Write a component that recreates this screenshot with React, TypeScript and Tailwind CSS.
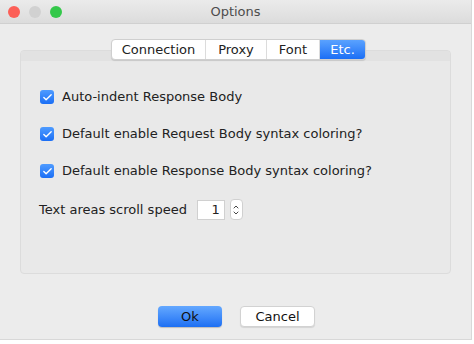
import { Check, ChevronUp, ChevronDown } from 'lucide-react';

const tabs = [
  { label: 'Connection', w: 'w-[94px]' },
  { label: 'Proxy', w: 'w-[61px]' },
  { label: 'Font', w: 'w-[53px]' },
  { label: 'Etc.', w: 'w-[45px]' },
];

const options = [
  'Auto-indent Response Body',
  'Default enable Request Body syntax coloring?',
  'Default enable Response Body syntax coloring?',
];

function CheckBox() {
  return (
    <span className="flex h-[14px] w-[14px] items-center justify-center rounded-[3px] bg-gradient-to-b from-[#4e9bff] to-[#1a6ef5]">
      <Check className="h-[11px] w-[11px] text-white" strokeWidth={3} />
    </span>
  );
}

export default function App() {
  return (
    <div
      className="flex h-[344px] w-[474px] flex-col bg-white"
      style={{ fontFamily: '"DejaVu Sans", "Open Sans", sans-serif' }}
    >
      <div className="flex h-[340px] w-[472px] flex-col border-r border-b border-[#d8d8d8] bg-[#ececec]">
        {/* Title bar */}
        <div className="relative flex h-[24px] items-center border-b border-[#d0d0d0] bg-gradient-to-b from-[#ebebeb] to-[#dcdcdc] px-[8px]">
          <div className="flex gap-[9px]">
            <span className="h-[12px] w-[12px] rounded-full bg-[#fc5f57]" />
            <span className="h-[12px] w-[12px] rounded-full bg-[#d1d1d1]" />
            <span className="h-[12px] w-[12px] rounded-full bg-[#34c84a]" />
          </div>
          <div className="absolute inset-0 flex items-center justify-center text-[13px] text-[#4d4d4d]">
            Options
          </div>
        </div>

        {/* Tab panel */}
        <div className="relative mx-[20px] mt-[26px] h-[224px] rounded-[4px] border border-[#dcdcdc] bg-[#e9e9e9]">
          <div className="absolute left-0 right-0 top-0 h-[10px] rounded-t-[4px] bg-[#e2e2e2]" />
          <div className="absolute -top-[12px] left-[90px] flex h-[21px] overflow-hidden rounded-[4px] border border-[#cfcfcf] bg-white text-[13px] shadow-[0_1px_1px_rgba(0,0,0,0.12)]">
            {tabs.map((t, i) => (
              <div
                key={t.label}
                className={
                  i === 3
                    ? `flex ${t.w} items-center justify-center bg-gradient-to-b from-[#5aa2ff] to-[#1a6ef5] text-white`
                    : `flex ${t.w} items-center justify-center border-r border-[#dcdcdc] text-[#222]`
                }
              >
                {t.label}
              </div>
            ))}
          </div>

          <div className="flex flex-col pl-[19px] pt-[37px] text-[13px] text-[#222]">
            {options.map((o) => (
              <div key={o} className="mb-[19px] flex h-[18px] items-center gap-[8px]">
                <CheckBox />
                <span>{o}</span>
              </div>
            ))}
            <div className="-ml-[1px] flex items-center">
              <span>Text areas scroll speed</span>
              <div className="ml-[10px] flex h-[20px] w-[28px] items-center justify-end border border-[#d0d0d0] bg-white pr-[4px]">
                1
              </div>
              <div className="ml-[5px] flex h-[21px] w-[13px] flex-col items-center justify-center rounded-[4px] border border-[#d0d0d0] bg-white">
                <ChevronUp className="-mb-[2px] h-[8px] w-[8px]" strokeWidth={2.5} />
                <ChevronDown className="h-[8px] w-[8px]" strokeWidth={2.5} />
              </div>
            </div>
          </div>
        </div>

        {/* Buttons */}
        <div className="mt-[32px] flex justify-center gap-[18px] pl-[2px] text-[13px]">
          <button className="h-[21px] w-[64px] rounded-[4px] bg-gradient-to-b from-[#64a8ff] to-[#1c6ff3] text-[#111] shadow-[0_1px_1px_rgba(0,0,0,0.2)]">
            Ok
          </button>
          <button className="h-[21px] w-[75px] rounded-[4px] border border-[#d2d2d2] bg-white text-[#111] shadow-[0_1px_1px_rgba(0,0,0,0.1)]">
            Cancel
          </button>
        </div>
      </div>
    </div>
  );
}
